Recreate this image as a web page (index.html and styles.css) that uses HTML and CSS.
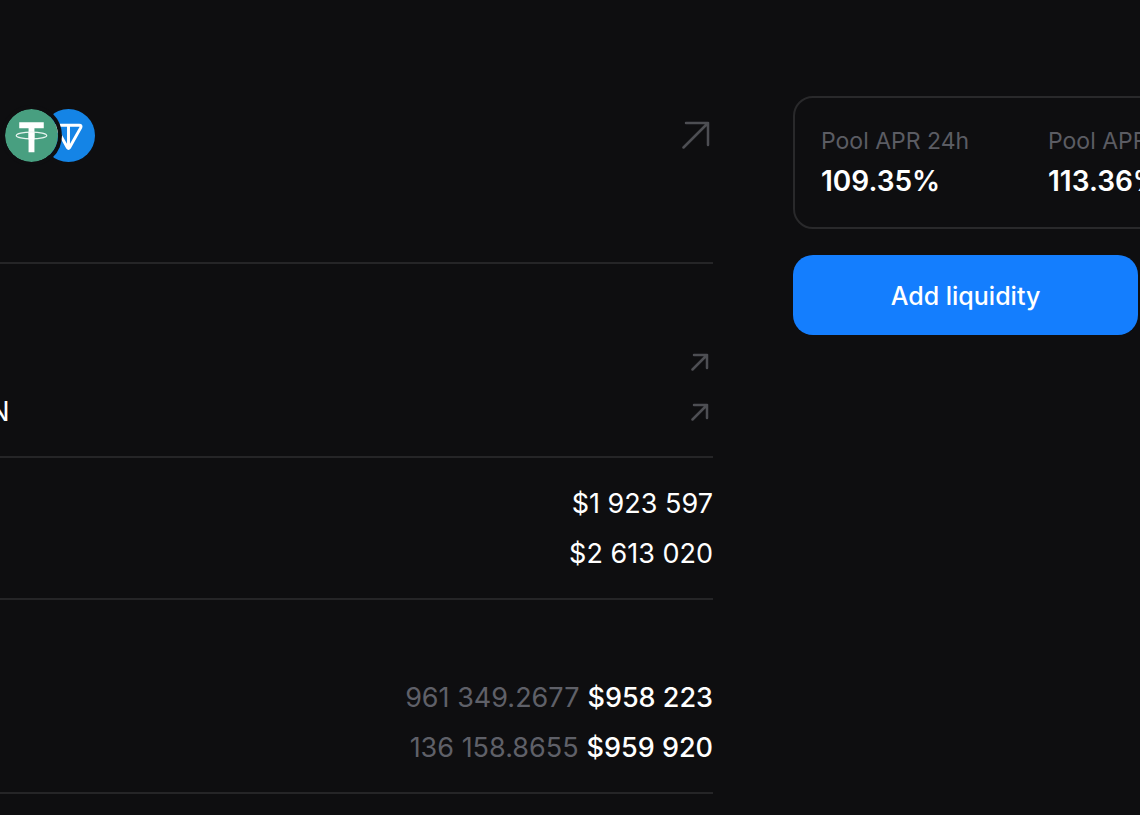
FILE: index.html
```html
<!DOCTYPE html>
<html lang="en">
<head>
<meta charset="utf-8">
<title>Pool</title>
<link rel="stylesheet" href="styles.css">
</head>
<body>
<div class="page">
  <main class="details">
    <header class="pool-head">
      <div class="tokens">
        <svg class="token token-front" viewBox="0 0 54 54" aria-label="Tether">
          <circle cx="27" cy="27" r="27" fill="#489f80"/>
          <path fill="#fff" d="M14.500 13.500h25v6h-9.500v24.500h-6V19.500h-9.500z"/>
          <ellipse cx="27" cy="27" rx="15.500" ry="3.500" fill="none" stroke="#e6f3ee" stroke-width="1.300"/>
          <path fill="#fff" d="M24 24h6v7h-6z"/>
        </svg>
        <svg class="token token-back" viewBox="0 0 54 54" aria-label="Toncoin">
          <circle cx="27" cy="27" r="27" fill="#1484e6"/>
          <path fill="none" stroke="#fff" stroke-width="3" stroke-linejoin="round" d="M16 16.500h22q2.500 0 1.500 2.500L28 39.500Q27 41 26 39.500L14.500 19q-1-2.500 1.500-2.500zM27 17v23"/>
        </svg>
      </div>
      <a class="link" href="#" aria-label="Open pool">
        <svg class="arrow-large" viewBox="0 0 28 28"><path d="M1.500 26.500 26 2M4 2h22v22"/></svg>
      </a>
    </header>
    <section class="group assets">
      <div class="row">
        <span></span>
        <a class="link" href="#" aria-label="Open first token"><svg class="arrow" viewBox="0 0 18 18"><path d="M1.500 16.500 16 2M3 2h13v13"/></svg></a>
      </div>
      <div class="row">
        <span>TON</span>
        <a class="link" href="#" aria-label="Open second token"><svg class="arrow" viewBox="0 0 18 18"><path d="M1.500 16.500 16 2M3 2h13v13"/></svg></a>
      </div>
    </section>
    <section class="group totals">
      <div class="row value">$1 923 597</div>
      <div class="row value">$2 613 020</div>
    </section>
    <section class="group reserves">
      <div class="row value"><span class="amount">961 349.2677</span><span class="usd">$958 223</span></div>
      <div class="row value"><span class="amount">136 158.8655</span><span class="usd">$959 920</span></div>
    </section>
  </main>
  <aside class="side">
    <dl class="apr">
      <div class="stat"><dt>Pool APR 24h</dt><dd>109.35%</dd></div>
      <div class="stat"><dt>Pool APR 7d</dt><dd>113.36%</dd></div>
    </dl>
    <button class="add" type="button">Add liquidity</button>
  </aside>
</div>
</body>
</html>
```
FILE: styles.css
```css
* {
  box-sizing: border-box;
}

body {
  margin: 0;
  min-height: 100vh;
  overflow: hidden;
  background: #0e0e10;
  color: #fff;
  font-family: Inter, "Liberation Sans", sans-serif;
}

.page {
  display: grid;
  grid-template-columns: minmax(0, 761fr) minmax(0, 347fr);
  gap: 80px;
  margin-left: -48px;
  padding-top: 96px;
}

.pool-head {
  display: flex;
  justify-content: space-between;
  align-items: flex-start;
  height: 168px;
  padding: 13px 3px 0 53px;
  border-bottom: 2px solid #252527;
}

.tokens {
  display: flex;
}

.token {
  width: 53px;
  height: 53px;
}

.token-front {
  z-index: 1;
  border-radius: 50%;
  box-shadow: 0 0 0 4px #0e0e10;
}

.token-back {
  margin-left: -16px;
}

.link {
  display: flex;
  color: #4d4e53;
}

.link svg {
  fill: none;
  stroke: currentColor;
  stroke-width: 2.5;
  stroke-linecap: round;
  stroke-linejoin: round;
}

.arrow-large {
  width: 28px;
  height: 28px;
  margin-top: 12px;
}

.arrow {
  width: 18px;
  height: 18px;
  margin-right: 4px;
}

.group {
  padding-bottom: 19px;
  border-bottom: 2px solid #252527;
}

.assets {
  padding-top: 73px;
}

.totals {
  padding-top: 21px;
}

.reserves {
  padding-top: 73px;
}

.row {
  display: flex;
  justify-content: space-between;
  align-items: center;
  height: 50px;
  font-size: 27px;
  line-height: 32px;
}

.value {
  justify-content: flex-end;
  gap: 8px;
}

.amount {
  color: #5f6068;
}

.usd {
  font-weight: 500;
}

.apr {
  display: grid;
  grid-template-columns: repeat(2, 200px);
  gap: 27px;
  width: max-content;
  margin: 0 0 26px;
  padding: 27px 26px 26px;
  border: 2px solid #29292b;
  border-radius: 20px;
}

dt {
  color: #5b5c63;
  font-size: 23px;
  line-height: 32px;
}

dd {
  margin: 0;
  padding-top: 4px;
  font-size: 28px;
  font-weight: 600;
  line-height: 40px;
}

.add {
  width: calc(100% - 2px);
  height: 80px;
  padding-top: 2px;
  border: 0;
  border-radius: 20px;
  background: #147efe;
  color: #fff;
  font: 500 25px/32px Inter, "Liberation Sans", sans-serif;
}
```
